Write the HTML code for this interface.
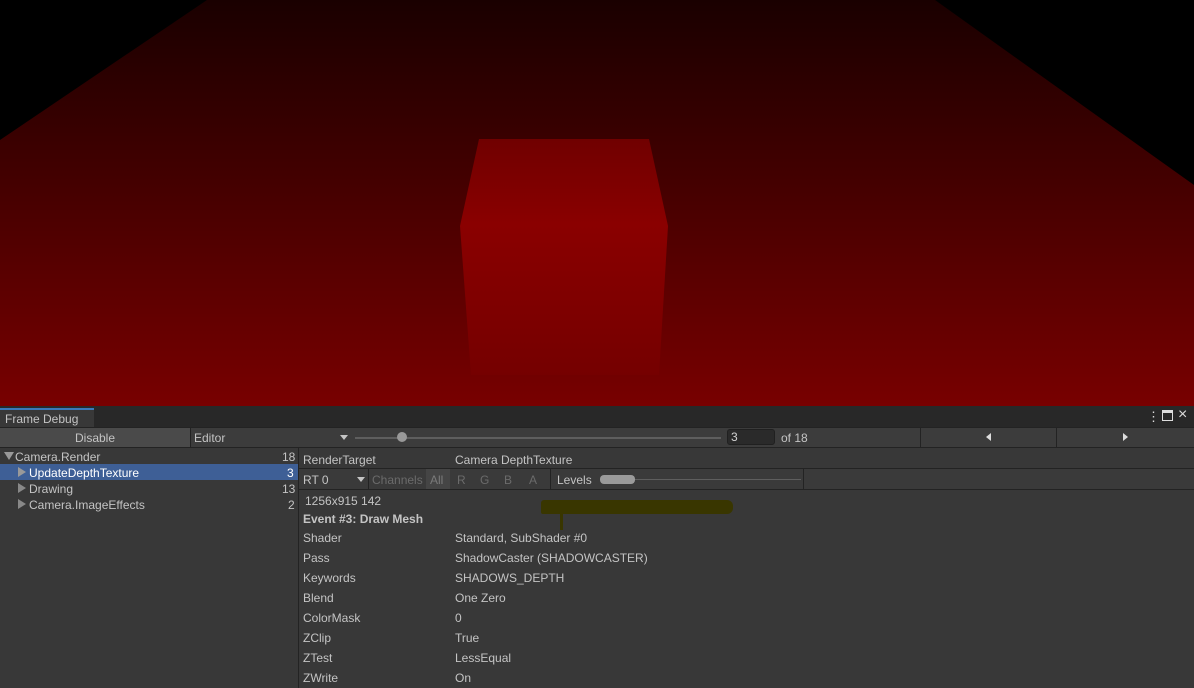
<!DOCTYPE html>
<html><head><style>
*{margin:0;padding:0;box-sizing:border-box}
body{width:1194px;height:688px;overflow:hidden;background:#383838;font-family:"Liberation Sans",sans-serif;font-size:12px;color:#c4c4c4;position:relative}
.a{position:absolute;white-space:nowrap}
</style></head><body>
<svg class="a" style="left:0;top:0" width="1194" height="406">
<defs>
<linearGradient id="f" x1="0" y1="0" x2="0" y2="1"><stop offset="0" stop-color="#1a0000"/><stop offset="0.3" stop-color="#360000"/><stop offset="1" stop-color="#780000"/></linearGradient>
<linearGradient id="c" x1="0" y1="0" x2="0" y2="1"><stop offset="0" stop-color="#700000"/><stop offset="0.36" stop-color="#8a0000"/><stop offset="1" stop-color="#750000"/></linearGradient>
</defs>
<rect width="1194" height="406" fill="#000"/>
<polygon points="207,0 935,0 1194,185 1194,406 0,406 0,140" fill="url(#f)"/>
<polygon points="479,139 649,139 668,226 659,375 471,375 460,226" fill="url(#c)"/>
</svg>
<div class="a" style="left:0;top:406px;width:1194px;height:21px;background:#282828"></div>
<div class="a" style="left:0;top:408px;width:94px;height:19px;background:#383838;border-top:2px solid #3a79bb;padding:2px 5px">Frame Debug</div>
<div class="a" style="left:1147px;top:409px;font-size:13px;color:#ddd">⋮</div>
<div class="a" style="left:1162px;top:410px;width:11px;height:11px;border:1.5px solid #ddd;border-top-width:3px"></div>
<div class="a" style="left:1178px;top:406px;font-size:16px;color:#ddd">×</div>
<div class="a" style="left:0;top:427px;width:1194px;height:21px;background:#3c3c3c;border-top:1px solid #232323;border-bottom:1px solid #232323"></div>
<div class="a" style="left:0;top:428px;width:190px;height:19px;background:#4a4a4a;text-align:center;padding-top:3px">Disable</div>
<div class="a" style="left:190px;top:428px;width:162px;height:19px;background:#3c3c3c;border-left:1px solid #232323;padding:3px 3px">Editor</div>
<div class="a" style="left:340px;top:435px;width:0;height:0;border-left:4px solid transparent;border-right:4px solid transparent;border-top:5px solid #c4c4c4"></div>
<div class="a" style="left:355px;top:437px;width:366px;height:2px;background:#5e5e5e"></div>
<div class="a" style="left:397px;top:432px;width:10px;height:10px;border-radius:5px;background:#999"></div>
<div class="a" style="left:727px;top:429px;width:48px;height:16px;background:#2a2a2a;border:1px solid #202020;border-radius:3px;padding:0 3px;color:#d2d2d2">3</div>
<div class="a" style="left:781px;top:431px">of 18</div>
<div class="a" style="left:920px;top:428px;width:1px;height:19px;background:#232323"></div>
<div class="a" style="left:1056px;top:428px;width:1px;height:19px;background:#232323"></div>
<div class="a" style="left:986px;top:433px;width:0;height:0;border-top:4px solid transparent;border-bottom:4px solid transparent;border-right:5px solid #ddd"></div>
<div class="a" style="left:1123px;top:433px;width:0;height:0;border-top:4px solid transparent;border-bottom:4px solid transparent;border-left:5px solid #ddd"></div>
<div class="a" style="left:298px;top:448px;width:1px;height:240px;background:#232323"></div>
<div class="a" style="left:4px;top:452px;width:0;height:0;border-left:5px solid transparent;border-right:5px solid transparent;border-top:8px solid #999"></div>
<div class="a" style="left:15px;top:450px">Camera.Render</div><div class="a" style="left:282px;top:450px">18</div>
<div class="a" style="left:0;top:464px;width:298px;height:16px;background:#3e5f96"></div>
<div class="a" style="left:18px;top:467px;width:0;height:0;border-top:5px solid transparent;border-bottom:5px solid transparent;border-left:8px solid #999"></div>
<div class="a" style="left:29px;top:466px;color:#fff">UpdateDepthTexture</div><div class="a" style="left:287px;top:466px;color:#fff">3</div>
<div class="a" style="left:18px;top:483px;width:0;height:0;border-top:5px solid transparent;border-bottom:5px solid transparent;border-left:8px solid #888"></div>
<div class="a" style="left:29px;top:482px">Drawing</div><div class="a" style="left:282px;top:482px">13</div>
<div class="a" style="left:18px;top:499px;width:0;height:0;border-top:5px solid transparent;border-bottom:5px solid transparent;border-left:8px solid #888"></div>
<div class="a" style="left:29px;top:498px">Camera.ImageEffects</div><div class="a" style="left:288px;top:498px">2</div>
<div class="a" style="left:303px;top:453px">RenderTarget</div><div class="a" style="left:455px;top:453px">Camera DepthTexture</div>
<div class="a" style="left:299px;top:468px;width:895px;height:22px;border-top:1px solid #232323;border-bottom:1px solid #232323;background:#3a3a3a"></div>
<div class="a" style="left:303px;top:473px">RT 0</div>
<div class="a" style="left:357px;top:477px;width:0;height:0;border-left:4px solid transparent;border-right:4px solid transparent;border-top:5px solid #c4c4c4"></div>
<div class="a" style="left:368px;top:469px;width:1px;height:20px;background:#232323"></div>
<div class="a" style="left:372px;top:473px;color:#6b6b6b">Channels</div>
<div class="a" style="left:426px;top:469px;width:24px;height:20px;background:#454545"></div>
<div class="a" style="left:430px;top:473px;color:#7a7a7a">All</div>
<div class="a" style="left:457px;top:473px;color:#6b6b6b">R</div>
<div class="a" style="left:480px;top:473px;color:#6b6b6b">G</div>
<div class="a" style="left:504px;top:473px;color:#6b6b6b">B</div>
<div class="a" style="left:529px;top:473px;color:#6b6b6b">A</div>
<div class="a" style="left:550px;top:469px;width:1px;height:20px;background:#232323"></div>
<div class="a" style="left:557px;top:473px">Levels</div>
<div class="a" style="left:603px;top:479px;width:198px;height:1px;background:#5e5e5e"></div>
<div class="a" style="left:600px;top:475px;width:35px;height:9px;border-radius:4px;background:#9a9a9a"></div>
<div class="a" style="left:803px;top:469px;width:1px;height:20px;background:#232323"></div>
<div class="a" style="left:305px;top:494px">1256x915 142</div>
<div class="a" style="left:303px;top:512px;font-weight:bold">Event #3: Draw Mesh</div>
<div class="a" style="left:541px;top:500px;width:192px;height:14px;background:#393600;border-radius:3px 6px 6px 2px"></div>
<div class="a" style="left:560px;top:514px;width:3px;height:16px;background:#393600"></div>
<div class="a" style="left:303px;top:531px">Shader</div><div class="a" style="left:455px;top:531px">Standard, SubShader #0</div>
<div class="a" style="left:303px;top:551px">Pass</div><div class="a" style="left:455px;top:551px">ShadowCaster (SHADOWCASTER)</div>
<div class="a" style="left:303px;top:571px">Keywords</div><div class="a" style="left:455px;top:571px">SHADOWS_DEPTH</div>
<div class="a" style="left:303px;top:591px">Blend</div><div class="a" style="left:455px;top:591px">One Zero</div>
<div class="a" style="left:303px;top:611px">ColorMask</div><div class="a" style="left:455px;top:611px">0</div>
<div class="a" style="left:303px;top:631px">ZClip</div><div class="a" style="left:455px;top:631px">True</div>
<div class="a" style="left:303px;top:651px">ZTest</div><div class="a" style="left:455px;top:651px">LessEqual</div>
<div class="a" style="left:303px;top:671px">ZWrite</div><div class="a" style="left:455px;top:671px">On</div>
</body></html>
